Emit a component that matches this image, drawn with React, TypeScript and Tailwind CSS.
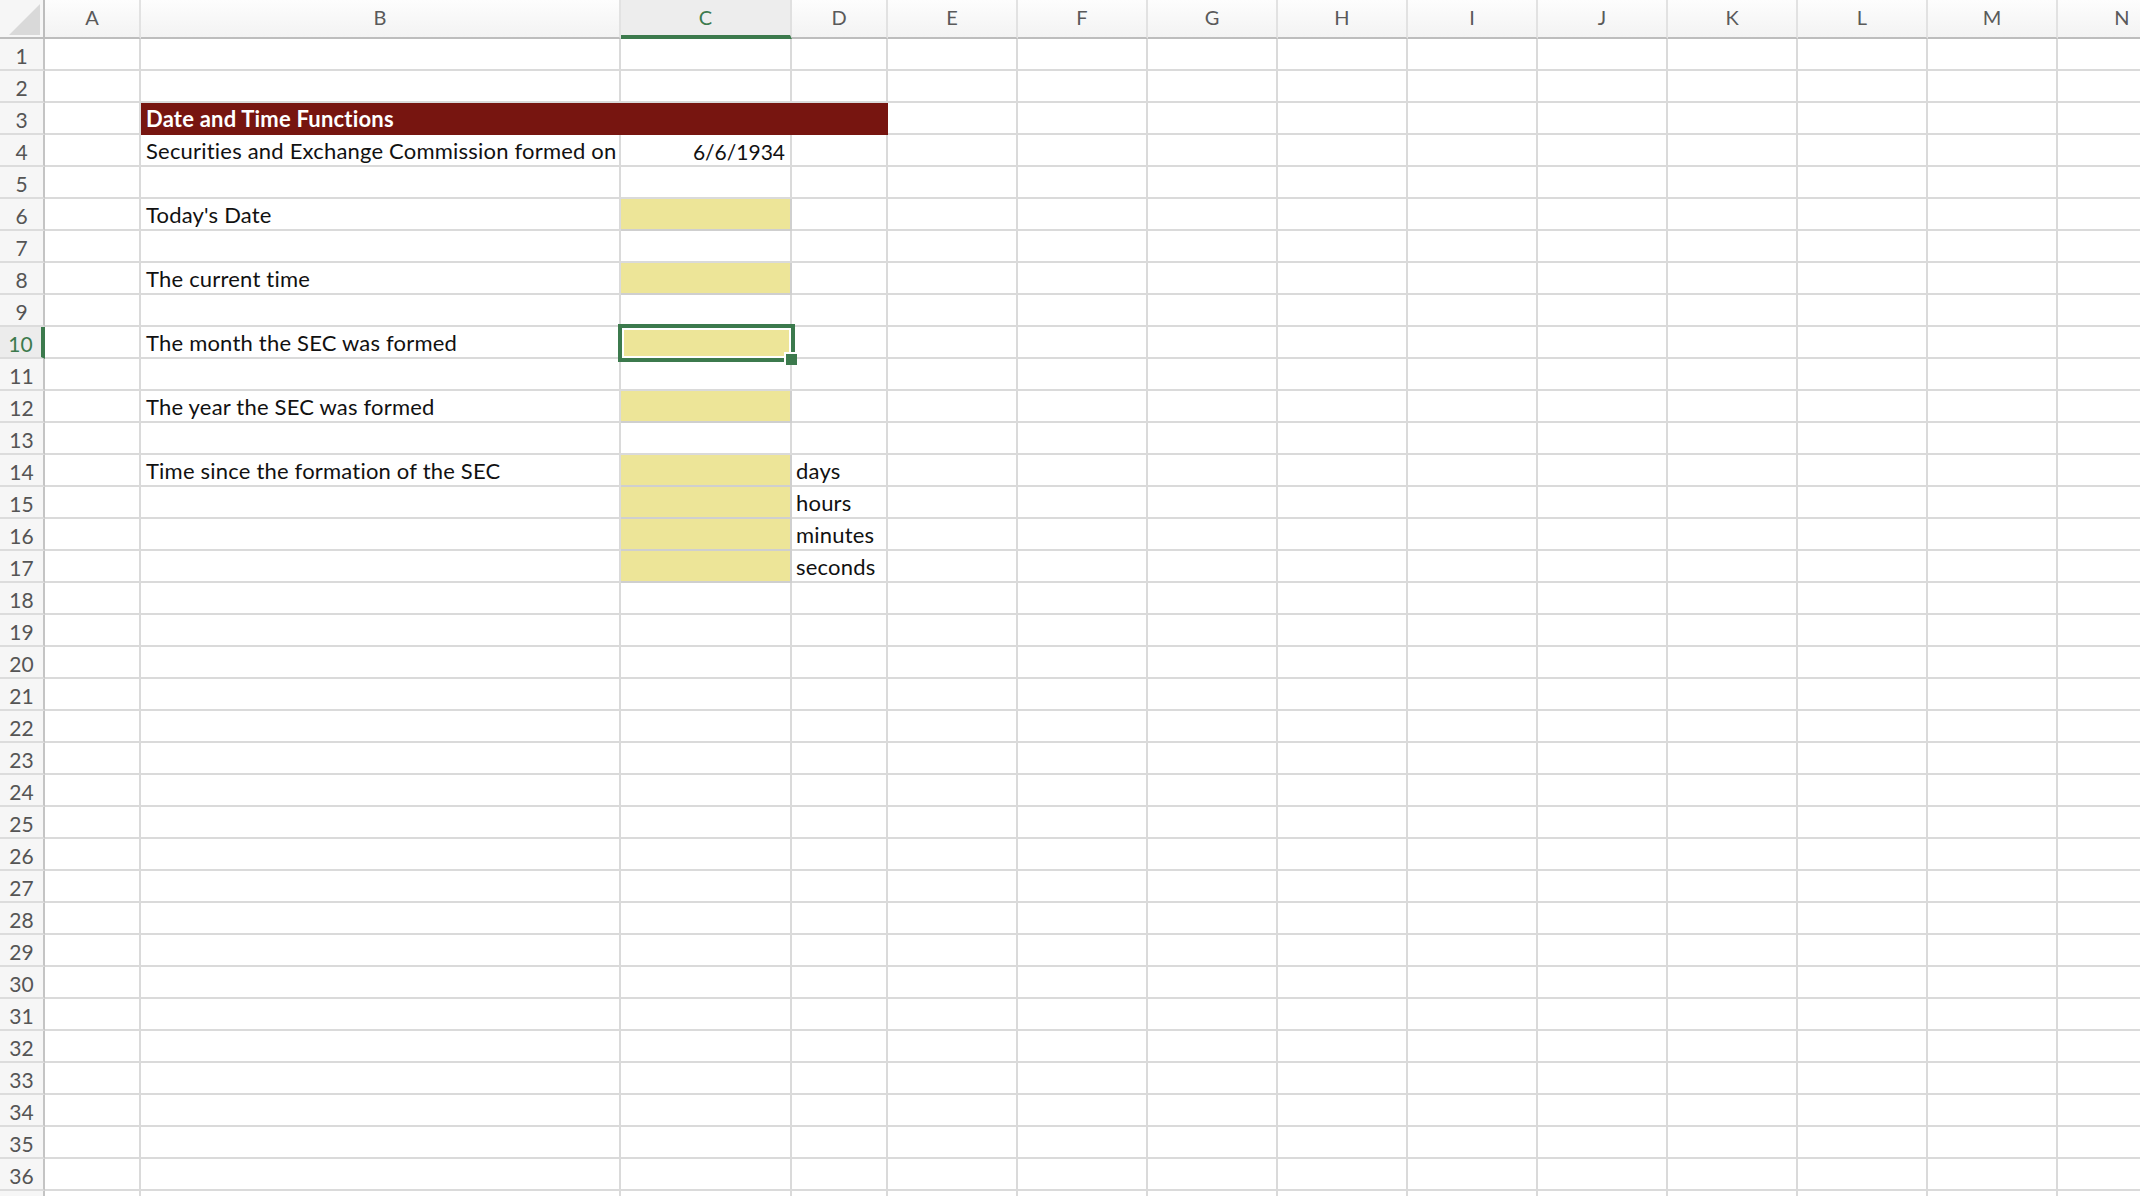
import React from "react";

type Col = { key: string; w: string };

const COLS: Col[] = [
  { key: "A", w: "w-[96px]" },
  { key: "B", w: "w-[480px]" },
  { key: "C", w: "w-[171px]" },
  { key: "D", w: "w-[96px]" },
  { key: "E", w: "w-[130px]" },
  { key: "F", w: "w-[130px]" },
  { key: "G", w: "w-[130px]" },
  { key: "H", w: "w-[130px]" },
  { key: "I", w: "w-[130px]" },
  { key: "J", w: "w-[130px]" },
  { key: "K", w: "w-[130px]" },
  { key: "L", w: "w-[130px]" },
  { key: "M", w: "w-[130px]" },
  { key: "N", w: "w-[130px]" },
];

const YELLOW_ROWS = [6, 8, 10, 12, 14, 15, 16, 17];

const B_TEXT: Record<number, string> = {
  4: "Securities and Exchange Commission formed on",
  6: "Today's Date",
  8: "The current time",
  10: "The month the SEC was formed",
  12: "The year the SEC was formed",
  14: "Time since the formation of the SEC",
};

const D_TEXT: Record<number, string> = {
  14: "days",
  15: "hours",
  16: "minutes",
  17: "seconds",
};

const FONT = { fontFamily: "Lato, 'Open Sans', 'Liberation Sans', sans-serif" };

function Cell({ row, col }: { row: number; col: Col }) {
  const k = col.key;
  const isTitle = row === 3 && (k === "B" || k === "C" || k === "D");
  const isYellow = k === "C" && YELLOW_ROWS.includes(row);

  let cls =
    "shrink-0 h-full border-b-2 flex items-end pb-[3px] overflow-visible whitespace-nowrap text-[22px] tracking-[0.2px] leading-none text-[#111] " +
    col.w;

  if (isTitle) {
    cls += " bg-[#771510] border-[#771510]";
    cls += k === "D" ? " border-r-2" : " border-r-2 border-r-[#771510]";
  } else if (isYellow) {
    cls += " bg-[#ede598] border-r-2 border-[#cfcfcf]";
  } else {
    cls += " bg-white border-r-2 border-[#dadada]";
  }

  let content: React.ReactNode = null;
  if (k === "B" && row === 3) {
    content = (
      <span className="pl-[5px] font-bold text-white relative z-10">Date and Time Functions</span>
    );
  } else if (k === "B" && B_TEXT[row]) {
    content = <span className="pl-[5px]">{B_TEXT[row]}</span>;
  } else if (k === "C" && row === 4) {
    content = (
      <span className="w-full text-right pr-[5px] text-[21px] tracking-normal">6/6/1934</span>
    );
  } else if (k === "D" && D_TEXT[row]) {
    content = <span className="pl-[4px]">{D_TEXT[row]}</span>;
  }

  return <div className={cls}>{content}</div>;
}

export default function App() {
  const rows = Array.from({ length: 37 }, (_, i) => i + 1);
  return (
    <div
      className="relative w-[2140px] h-[1196px] overflow-hidden bg-white select-none"
      style={FONT}
    >
      {/* column headers */}
      <div className="flex h-[39px]">
        <div className="shrink-0 w-[45px] h-full bg-[#f6f6f6] border-b-2 border-r-2 border-[#bdbdbd] relative">
          <svg className="absolute left-[9px] top-[4px]" width="31" height="31" viewBox="0 0 31 31">
            <polygon points="31,0 31,31 0,31" fill="#d9d9d9" />
          </svg>
        </div>
        {COLS.map((c) => {
          const sel = c.key === "C";
          return (
            <div
              key={c.key}
              className={
                "shrink-0 h-full flex items-center justify-center pb-[3px] text-[20px] " +
                c.w +
                (sel
                  ? " bg-[#ededed] border-b-4 border-b-[#3c7a4d] border-r-2 border-r-[#e0e0e0] text-[#3c7a4d]"
                  : " bg-gradient-to-b from-[#fdfdfd] to-[#f3f3f3] border-b-2 border-b-[#bdbdbd] border-r-2 border-r-[#e2e2e2] text-[#5a5a5a]")
              }
            >
              <span className={sel ? "pt-[2px]" : ""}>{c.key}</span>
            </div>
          );
        })}
      </div>

      {/* rows */}
      {rows.map((r) => {
        const sel = r === 10;
        return (
          <div key={r} className="flex h-[32px]">
            <div
              className={
                "shrink-0 w-[45px] h-full flex items-end justify-center pb-[3px] text-[21px] leading-none border-b-2 border-b-[#dcdcdc] " +
                (sel
                  ? "bg-[#ececec] border-r-4 border-r-[#3c7a4d] text-[#3c7a4d]"
                  : "bg-[#f6f6f6] border-r-2 border-r-[#c4c4c4] text-[#555]")
              }
            >
              {r <= 36 ? r : null}
            </div>
            {COLS.map((c) => (
              <Cell key={c.key} row={r} col={c} />
            ))}
          </div>
        );
      })}

      {/* active cell selection C10 */}
      <div className="absolute left-[618px] top-[324px] w-[177px] h-[38px] border-4 border-[#3c7a4d] pointer-events-none">
        <div className="w-full h-full border-2 border-white" />
      </div>
      <div className="absolute left-[784px] top-[352px] w-[13px] h-[13px] bg-[#3c7a4d] border-l-2 border-t-2 border-white" />
    </div>
  );
}
